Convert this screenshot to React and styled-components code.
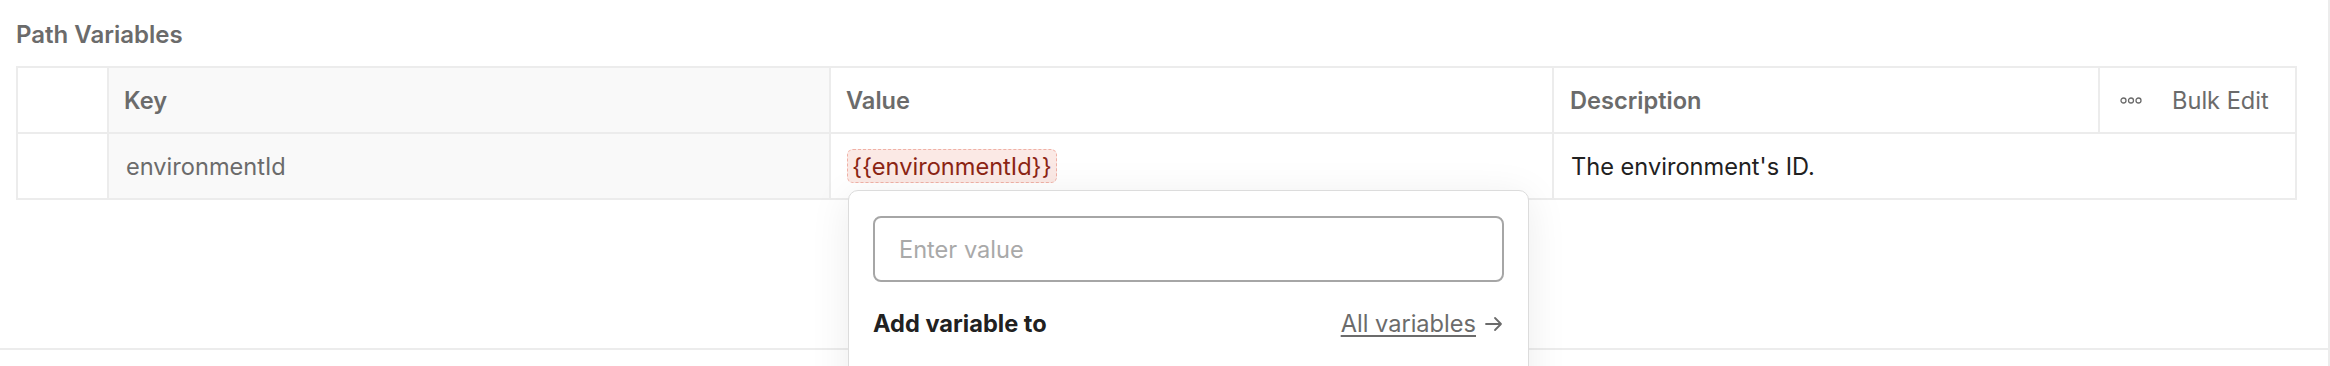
import React from 'react'
import styled, { createGlobalStyle } from 'styled-components'

const GlobalStyle = createGlobalStyle`
  html, body {
    margin: 0;
    padding: 0;
    background: #ffffff;
    font-family: Inter, "Noto Sans", "Liberation Sans", sans-serif;
  }
  * { box-sizing: border-box; }
`

const Page = styled.div`
  position: relative;
  width: 2330px;
  height: 366px;
  overflow: hidden;
  border-right: 2px solid #ececec;
  display: flex;
  flex-direction: column;
`

const Section = styled.div`
  flex: 1;
  padding: 20px 31px 0 16px;
`

const Title = styled.div`
  font-size: 24px;
  line-height: 29px;
  font-weight: 600;
  color: #6b6b6b;
  margin-bottom: 17px;
`

const Table = styled.div`
  display: grid;
  grid-template-columns: 91px 722px 723px 546px 1fr;
  border-top: 2px solid #ececec;
  border-left: 2px solid #ececec;
`

const Cell = styled.div`
  height: 66px;
  display: flex;
  align-items: center;
  padding-left: ${p => p.$pad ?? 16}px;
  border-right: 2px solid #ececec;
  border-bottom: 2px solid #ececec;
  background: ${p => (p.$muted ? '#f9f9f9' : '#ffffff')};
  grid-column: ${p => (p.$span ? `span ${p.$span}` : 'auto')};
  font-size: 23.6px;
  font-weight: ${p => (p.$head ? 600 : 400)};
  color: ${p => (p.$dark ? '#212121' : '#6b6b6b')};
  white-space: nowrap;
`

const Pill = styled.span`
  display: inline-flex;
  align-items: center;
  height: 34px;
  padding: 0 4px;
  margin-left: -2px;
  border: 1.5px dashed #f0b1a6;
  border-radius: 6px;
  background: #fbe9e5;
  color: #8c2514;
`

const BulkEdit = styled.div`
  display: flex;
  align-items: center;
  gap: 30px;
  font-weight: 400;
  color: #6b6b6b;
`

const Footer = styled.div`
  height: 18px;
  border-top: 2px solid #ececec;
`

const Popover = styled.div`
  position: absolute;
  left: 848px;
  top: 190px;
  width: 681px;
  height: 240px;
  background: #ffffff;
  border: 1.5px solid #dcdcdc;
  border-radius: 10px;
  box-shadow: 0 6px 40px rgba(0, 0, 0, 0.08);
  padding: 25px 24px 0 24px;
`

const Field = styled.div`
  height: 66px;
  border: 2px solid #a6a6a6;
  border-radius: 8px;
  display: flex;
  align-items: center;
  padding-left: 24px;
  font-size: 23.6px;
  color: #a9a9a9;
`

const AddRow = styled.div`
  margin-top: 27px;
  display: flex;
  align-items: center;
  justify-content: space-between;
  font-size: 23.6px;
  line-height: 29px;
`

const AddLabel = styled.span`
  font-weight: 700;
  color: #212121;
`

const AllLink = styled.span`
  display: flex;
  align-items: center;
  gap: 8px;
  color: #6b6b6b;
  u {
    text-decoration-thickness: 2px;
    text-underline-offset: 3px;
  }
`

const Dots = () => (
  <svg width="22" height="7" viewBox="0 0 22 7" fill="none" stroke="#6b6b6b" strokeWidth="1.3">
    <circle cx="3.5" cy="3.5" r="2.5" />
    <circle cx="11" cy="3.5" r="2.5" />
    <circle cx="18.5" cy="3.5" r="2.5" />
  </svg>
)

const Arrow = () => (
  <svg width="20" height="18" viewBox="0 0 20 18" fill="none" stroke="#6b6b6b" strokeWidth="1.8" strokeLinecap="round" strokeLinejoin="round">
    <path d="M2 9h15M11 3l6 6-6 6" />
  </svg>
)

export default function App() {
  return (
    <Page>
      <GlobalStyle />
      <Section>
        <Title>Path Variables</Title>
        <Table>
          <Cell />
          <Cell $head $muted $pad={15}>Key</Cell>
          <Cell $head $pad={15}>Value</Cell>
          <Cell $head $pad={16}>Description</Cell>
          <Cell $pad={20}>
            <BulkEdit>
              <Dots />
              <span>Bulk Edit</span>
            </BulkEdit>
          </Cell>

          <Cell />
          <Cell $muted $pad={17}>environmentId</Cell>
          <Cell $pad={18}>
            <Pill>{'{{environmentId}}'}</Pill>
          </Cell>
          <Cell $span={2} $dark $pad={17}>The environment's ID.</Cell>
        </Table>
      </Section>
      <Footer />
      <Popover>
        <Field>Enter value</Field>
        <AddRow>
          <AddLabel>Add variable to</AddLabel>
          <AllLink>
            <u>All variables</u>
            <Arrow />
          </AllLink>
        </AddRow>
      </Popover>
    </Page>
  )
}
